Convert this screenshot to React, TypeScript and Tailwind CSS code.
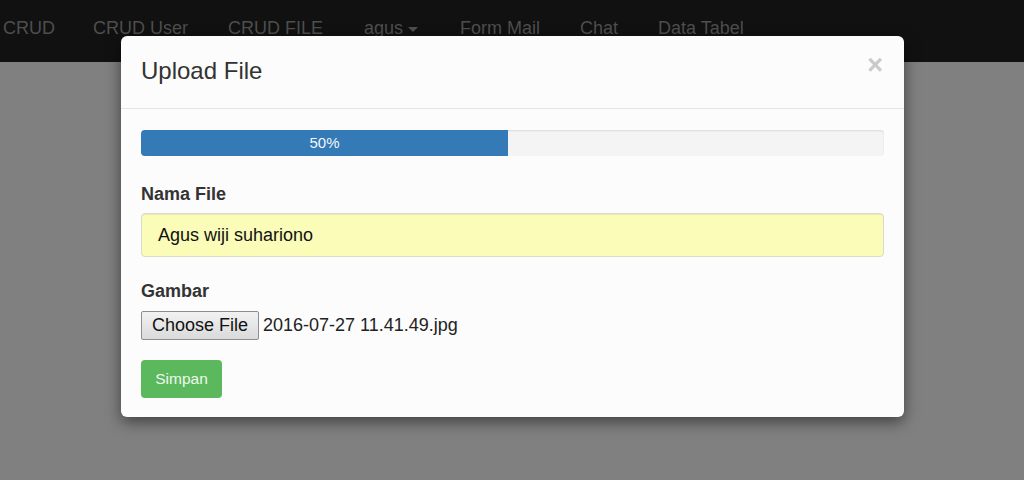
import React from "react";

export default function App() {
  return (
    <div className="relative w-[1024px] h-[480px] overflow-hidden bg-[#808080] font-['Liberation_Sans',Arial,sans-serif]">
      <div className="h-[62px] bg-[#111111] flex items-start pt-[15px] pl-[3px] text-[18px] text-[#4e4e4e]">
        <span className="w-[90px]">CRUD</span>
        <span className="w-[135px]">CRUD User</span>
        <span className="w-[136px]">CRUD FILE</span>
        <span className="w-[96px] flex items-center">
          agus
          <svg width="10" height="6" viewBox="0 0 10 6" className="ml-[5px] mt-[2px]">
            <path d="M0 0 L10 0 L5 5 Z" fill="#4e4e4e" />
          </svg>
        </span>
        <span className="w-[120px]">Form Mail</span>
        <span className="w-[78px]">Chat</span>
        <span>Data Tabel</span>
      </div>
      <div className="absolute left-[121px] top-[36px] w-[783px] h-[381px] bg-[#fbfcfb] rounded-[6px] shadow-[0_5px_15px_rgba(0,0,0,0.5)]">
        <div className="h-[73px] border-b border-[#e3e5e3] px-[20px] flex items-center justify-between">
          <span className="text-[24px] text-[#333333] mt-[-2px]">Upload File</span>
          <span className="text-[27px] font-bold text-[#c9cac9] leading-none mt-[-14px] mr-[1px]">×</span>
        </div>
        <div className="px-[20px] pt-[21px]">
          <div className="h-[26px] rounded-[4px] bg-[#f3f4f3] overflow-hidden flex shadow-[inset_0_1px_2px_rgba(0,0,0,0.1)]">
            <div className="w-[367px] bg-[#337ab7] flex items-center justify-center text-[15px] text-[#f4f7fa]">50%</div>
          </div>
          <div className="mt-[26px] text-[18px] font-bold text-[#333333] leading-[24px]">Nama File</div>
          <div className="mt-[7px] h-[44px] rounded-[4px] border border-[#d9dbcf] bg-[#fafcb8] flex items-center pl-[16px] text-[18px] text-[#111111] shadow-[inset_0_1px_1px_rgba(0,0,0,0.075)]">
            Agus wiji suhariono
          </div>
          <div className="mt-[22px] text-[18px] font-bold text-[#333333] leading-[24px]">Gambar</div>
          <div className="mt-[8px] flex items-center">
            <div className="h-[29px] w-[118px] border border-[#8e8e8e] rounded-[2px] bg-gradient-to-b from-[#f2f2f2] to-[#dadada] flex items-center justify-center text-[18px] text-[#111111]">
              Choose File
            </div>
            <span className="ml-[4px] text-[18px] text-[#222222]">2016-07-27 11.41.49.jpg</span>
          </div>
          <div className="mt-[20px] h-[38px] w-[81px] rounded-[4px] bg-[#5cb85c] flex items-center justify-center text-[15.5px] text-[#eef8ee]">
            Simpan
          </div>
        </div>
      </div>
    </div>
  );
}
